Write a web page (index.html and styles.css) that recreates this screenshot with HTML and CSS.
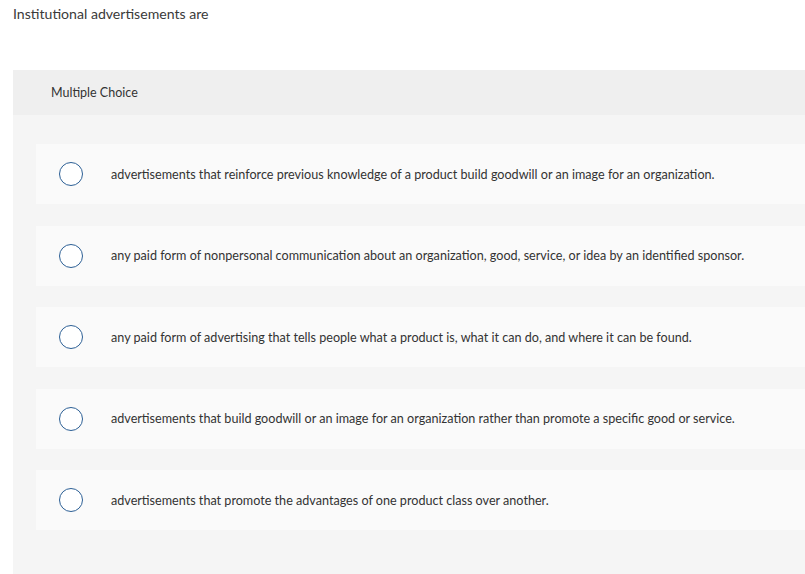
FILE: index.html
```html
<!DOCTYPE html>
<html>
<head>
<meta charset="utf-8">
<link rel="stylesheet" href="styles.css">
</head>
<body>
<p class="question">Institutional advertisements are</p>
<section class="panel">
  <div class="panel-head">Multiple Choice</div>
  <div class="options">
    <label class="option"><span class="radio"></span><span class="text">advertisements that reinforce previous knowledge of a product build goodwill or an image for an organization.</span></label>
    <label class="option"><span class="radio"></span><span class="text">any paid form of nonpersonal communication about an organization, good, service, or idea by an identified sponsor.</span></label>
    <label class="option"><span class="radio"></span><span class="text">any paid form of advertising that tells people what a product is, what it can do, and where it can be found.</span></label>
    <label class="option"><span class="radio"></span><span class="text">advertisements that build goodwill or an image for an organization rather than promote a specific good or service.</span></label>
    <label class="option"><span class="radio"></span><span class="text">advertisements that promote the advantages of one product class over another.</span></label>
  </div>
</section>
</body>
</html>
```
FILE: styles.css
```css
html, body {
  margin: 0;
  padding: 0;
  background: #ffffff;
  overflow: hidden;
}
body {
  font-family: "Lato", "Open Sans", sans-serif;
  color: #333333;
}
.question {
  margin: 0;
  padding: 5px 0 0 13px;
  font-size: 14.1px;
  line-height: 18px;
  color: #3a3a3a;
}
.panel {
  margin: 47px 0 0 13px;
  background: #f5f5f5;
  min-height: 520px;
}
.panel-head {
  height: 45px;
  display: flex;
  align-items: center;
  padding-left: 38px;
  background: #efefef;
  font-size: 12.5px;
  color: #333;
}
.options {
  display: flex;
  flex-direction: column;
  gap: 21.5px;
  padding: 29px 0 0 23px;
}
.option {
  height: 60px;
  display: flex;
  align-items: center;
  background: #fafafa;
  padding-left: 23px;
}
.radio {
  width: 22px;
  height: 22px;
  border: 1.5px solid #2c5f95;
  border-radius: 50%;
  background: #ffffff;
  flex: none;
  margin-right: 28px;
}
.text {
  font-size: 12.6px;
  color: #333;
}
```
